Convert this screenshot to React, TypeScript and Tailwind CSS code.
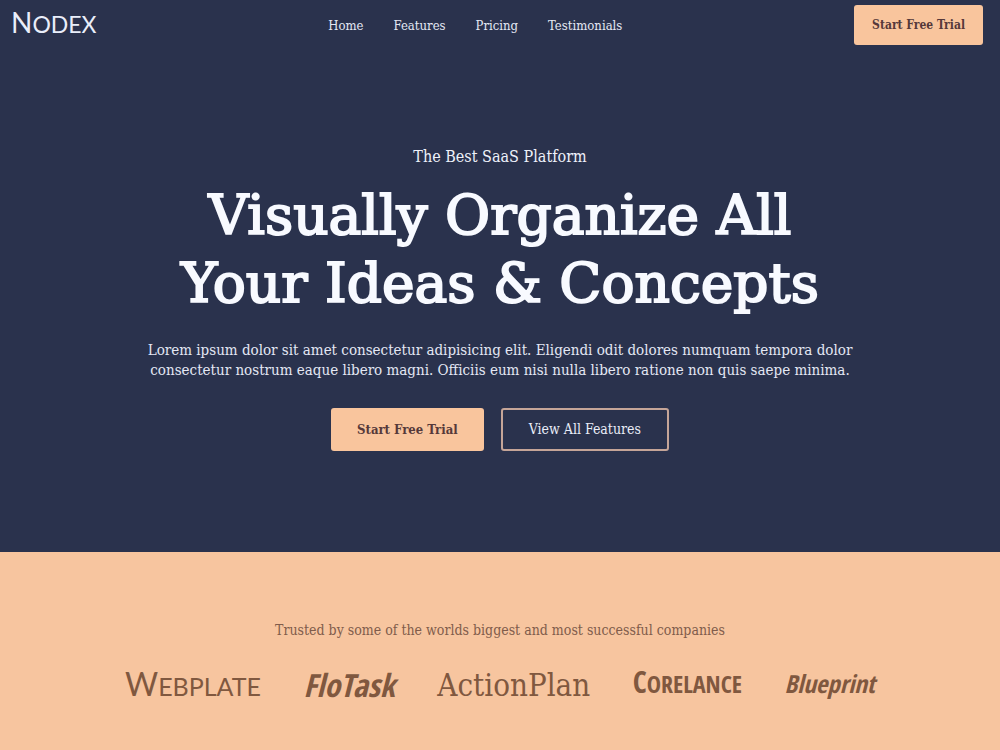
const navLinks = ['Home', 'Features', 'Pricing', 'Testimonials'];

const companies = [
  { name: 'Webplate', className: 'font-[Lato,sans-serif] text-[25px] uppercase first-letter:text-[32px]' },
  { name: 'FloTask', className: "font-['Open_Sans_Condensed','Open_Sans',sans-serif] text-[32px] font-bold italic" },
  { name: 'ActionPlan', className: "font-['DejaVu_Serif_Condensed','DejaVu_Serif',serif] text-[31px]" },
  {
    name: 'Corelance',
    className:
      "font-['Open_Sans_Condensed','Open_Sans',sans-serif] pb-1 text-[24px] font-bold uppercase first-letter:text-[30px]",
  },
  { name: 'Blueprint', className: "font-['Open_Sans_Condensed','Open_Sans',sans-serif] pb-1 text-[25px] font-bold italic" },
];

function Header() {
  return (
    <header className="flex items-center justify-between pt-[5px] pr-[17px] pl-[11px]">
      <a
        href="#"
        className="block pb-1 font-[Lato,sans-serif] text-[23px] leading-8 text-[#e9eefa] uppercase first-letter:text-[28px]"
      >
        Nodex
      </a>
      <nav className="flex gap-[30px] pt-0.5 text-[13px] text-[#e4e8f4]">
        {navLinks.map((link) => (
          <a key={link} href={`#${link.toLowerCase()}`}>
            {link}
          </a>
        ))}
      </nav>
      <button className="h-10 rounded-[3px] bg-[#f9c59d] px-[18px] text-[12px] font-bold text-[#56393a]">
        Start Free Trial
      </button>
    </header>
  );
}

function Hero() {
  return (
    <section className="flex flex-col items-center px-6 pt-[100px] pb-[101px] text-center">
      <p className="text-[16px] leading-6 text-[#eef1fa]">The Best SaaS Platform</p>
      <h1 className="mt-3 font-['DejaVu_Serif',serif] text-[55px] leading-[68px] text-[#f8faff] [-webkit-text-stroke:2px]">
        Visually Organize All
        <br />
        Your Ideas &amp; Concepts
      </h1>
      <p className="mt-[23px] max-w-[720px] text-[15px] leading-5 text-[#e4e8f4]">
        Lorem ipsum dolor sit amet consectetur adipisicing elit. Eligendi odit dolores numquam tempora dolor
        consectetur nostrum eaque libero magni. Officiis eum nisi nulla libero ratione non quis saepe minima.
      </p>
      <div className="mt-7 flex gap-[17px]">
        <button className="h-[43px] rounded-[3px] bg-[#f9c59d] px-[26px] text-[13px] font-bold text-[#56393a]">
          Start Free Trial
        </button>
        <button className="h-[43px] rounded-[3px] border-2 border-[#c5a598] px-[26px] text-[14px] text-[#e9edf8]">
          View All Features
        </button>
      </div>
    </section>
  );
}

function TrustedBy() {
  return (
    <section className="flex-1 bg-[#f7c59f] px-6 pt-[68px] pb-12 text-[#80583f]">
      <p className="text-center text-[14px] leading-5 text-[#805c4b]">
        Trusted by some of the worlds biggest and most successful companies
      </p>
      <ul className="mx-auto mt-6 flex max-w-[750px] items-center justify-between leading-9">
        {companies.map((company) => (
          <li key={company.name} className={company.className}>
            {company.name}
          </li>
        ))}
      </ul>
    </section>
  );
}

export default function App() {
  return (
    <div className="flex min-h-screen flex-col bg-[#2a324d] font-['Roboto_Slab','DejaVu_Serif_Condensed','DejaVu_Serif',serif]">
      <Header />
      <Hero />
      <TrustedBy />
    </div>
  );
}
